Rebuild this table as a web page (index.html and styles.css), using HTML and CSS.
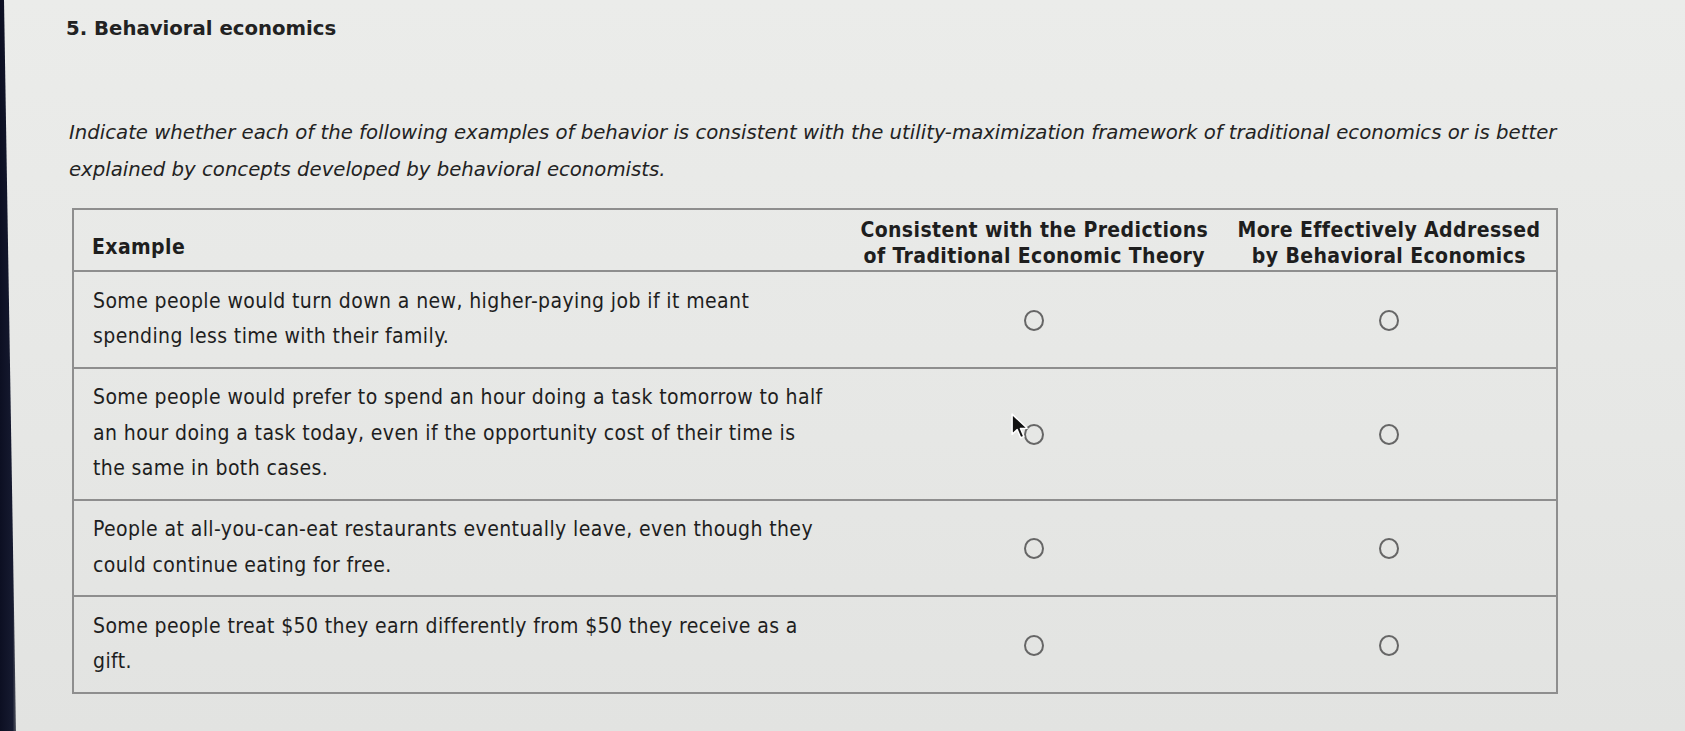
FILE: index.html
```html
<!DOCTYPE html>
<html lang="en">
<head>
<meta charset="utf-8">
<title>Behavioral economics</title>
<link rel="stylesheet" href="styles.css">
</head>
<body>
<div class="page">
  <h1 class="title">5. Behavioral economics</h1>
  <p class="intro">Indicate whether each of the following examples of behavior is consistent with the utility-maximization framework of traditional economics or is better explained by concepts developed by behavioral economists.</p>
  <table class="grid">
    <thead>
      <tr>
        <th class="col-ex">Example</th>
        <th class="col-opt">Consistent with the Predictions<br>of Traditional Economic Theory</th>
        <th class="col-opt">More Effectively Addressed<br>by Behavioral Economics</th>
      </tr>
    </thead>
    <tbody>
      <tr>
        <td class="ex"><div class="ex-text">Some people would turn down a new, higher-paying job if it meant spending less time with their family.</div></td>
        <td class="opt"><span class="radio"></span></td>
        <td class="opt"><span class="radio"></span></td>
      </tr>
      <tr>
        <td class="ex"><div class="ex-text">Some people would prefer to spend an hour doing a task tomorrow to half an hour doing a task today, even if the opportunity cost of their time is the same in both cases.</div></td>
        <td class="opt"><span class="radio"><svg class="cursor" width="18" height="27" viewBox="0 0 16 24"><path d="M1 1 L1 19 L5.5 14.8 L8.6 22 L11.4 20.8 L8.4 13.8 L14.4 13.6 Z" fill="#111" stroke="#fff" stroke-width="1.3" stroke-linejoin="round"/></svg></span></td>
        <td class="opt"><span class="radio"></span></td>
      </tr>
      <tr>
        <td class="ex"><div class="ex-text">People at all-you-can-eat restaurants eventually leave, even though they could continue eating for free.</div></td>
        <td class="opt"><span class="radio"></span></td>
        <td class="opt"><span class="radio"></span></td>
      </tr>
      <tr>
        <td class="ex"><div class="ex-text">Some people treat $50 they earn differently from $50 they receive as a gift.</div></td>
        <td class="opt"><span class="radio"></span></td>
        <td class="opt"><span class="radio"></span></td>
      </tr>
    </tbody>
  </table>
</div>
</body>
</html>
```
FILE: styles.css
```css
html, body {
  margin: 0;
  padding: 0;
}
body {
  background: linear-gradient(180deg, #ebecea 0%, #e6e7e5 60%, #e2e3e1 100%);
  color: #1f1f1f;
  font-family: "DejaVu Sans", Verdana, sans-serif;
  min-height: 731px;
  position: relative;
  overflow: hidden;
}
body::before {
  content: "";
  position: absolute;
  left: 0;
  top: 0;
  width: 18px;
  height: 731px;
  background: linear-gradient(90deg, #0c0f22 0%, #161a30 70%, #7a7c80 100%);
  clip-path: polygon(0 0, 4px 0, 16px 100%, 0 100%);
}
.page {
  padding: 17px 0 0 66px;
}
.title {
  margin: 0;
  font-size: 19.7px;
  line-height: 24px;
  font-weight: bold;
  color: #222;
}
.intro {
  margin: 73px 0 0 3px;
  width: 1540px;
  font-style: italic;
  font-size: 19.7px;
  line-height: 37px;
  color: #232323;
}
.grid {
  margin: 20px 0 0 6px;
  width: 1486px;
  border-collapse: collapse;
  border: 2px solid #8e8e8e;
  font-family: "DejaVu Sans Condensed", "DejaVu Sans", sans-serif;
  font-size: 21px;
  letter-spacing: 0.4px;
  color: #1e1e1e;
}
.grid th, .grid td {
  border-top: 2px solid #8e8e8e;
  border-bottom: 2px solid #8e8e8e;
}
.grid th {
  height: 55px;
  padding: 5px 0 0;
  line-height: 26px;
  font-weight: bold;
}
.grid th.col-ex {
  width: 755px;
  height: 46px;
  text-align: left;
  padding: 14px 0 0 18px;
  vertical-align: middle;
}
.col-opt {
  text-align: center;
  vertical-align: middle;
}
.grid th:nth-child(2) { width: 377px; }
.grid th:nth-child(3) { width: 336px; }
.ex {
  padding: 11.75px 0 11.75px 19px;
  line-height: 35.5px;
  text-align: left;
}
.ex-text {
  width: 732px;
}
.opt {
  text-align: center;
  vertical-align: middle;
}
.radio {
  display: inline-block;
  width: 16px;
  height: 17px;
  border: 2px solid #666;
  border-radius: 50%;
  vertical-align: middle;
  position: relative;
}
.cursor {
  position: absolute;
  left: -15px;
  top: -13px;
}
```
